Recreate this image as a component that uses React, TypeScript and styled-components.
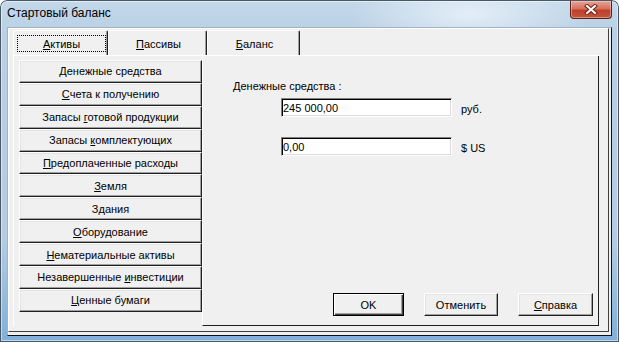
import * as React from 'react'
import styled, { createGlobalStyle } from 'styled-components'

const GlobalStyle = createGlobalStyle`
  html, body {
    margin: 0;
    padding: 0;
  }

  body {
    font-family: "Liberation Sans", Arial, sans-serif;
    background: #ffffff;
  }
`

const Window = styled.div`
  width: 619px;
  height: 342px;
  box-sizing: border-box;
  display: flex;
  flex-direction: column;
  padding: 0 7px 6px 7px;
  border-radius: 7px 7px 0 0;
  background:
    radial-gradient(ellipse 120px 40px at 470px 14px, rgba(236, 244, 250, 0.8), rgba(236, 244, 250, 0) 100%),
    linear-gradient(180deg, #c3d8ea 0%, #b9d0e5 10%, #b3cce3 70%, #7fb0da 100%);
  box-shadow: inset 0 0 0 1px #4a5866, inset 0 0 0 2px rgba(255, 255, 255, 0.5);
`

const TitleBar = styled.div`
  height: 27px;
  display: flex;
  align-items: flex-start;
  flex-shrink: 0;
`

const Title = styled.div`
  padding-top: 6px;
  font-size: 12px;
  line-height: 15px;
  color: #000;
`

const CloseButton = styled.div`
  margin-left: auto;
  margin-top: 1px;
  width: 42px;
  height: 18px;
  box-sizing: border-box;
  display: flex;
  align-items: center;
  justify-content: center;
  border: 1px solid #5b2218;
  border-top: 0;
  border-radius: 0 0 4px 4px;
  background: linear-gradient(180deg, #e6a596 0%, #d6705c 45%, #c0412a 55%, #c4553c 100%);
  box-shadow: inset 0 0 0 1px rgba(255, 220, 210, 0.45);
`

const Client = styled.div`
  flex: 1;
  display: flex;
  box-sizing: border-box;
  background: #f0f0f0;
  border: 1px solid;
  border-color: #a3b2c0 #101010 #101010 #a3b2c0;
  padding: 0 2px 3px 0;
`

const InnerFrame = styled.div`
  flex: 1;
  display: flex;
  box-sizing: border-box;
  border: 1px solid;
  border-color: #ffffff #404040 #404040 #ffffff;
  padding: 1px 9px 5px 4px;
`

const TabControl = styled.div`
  flex: 1;
  display: flex;
  flex-direction: column;
`

const TabStrip = styled.div`
  height: 25px;
  display: flex;
  flex-shrink: 0;
`

const Tab = styled.div<{ $width: number }>`
  width: ${p => p.$width}px;
  box-sizing: border-box;
  display: flex;
  padding: 4px 1px 3px 3px;
  border-top: 1px solid #ffffff;
  border-left: 1px solid #ffffff;
  border-right: 1px solid #202020;
  border-radius: 2px 2px 0 0;
  box-shadow: inset -1px 0 #a0a0a0;
`

const TabLabel = styled.div<{ $focused?: boolean }>`
  flex: 1;
  display: flex;
  align-items: center;
  justify-content: center;
  border: 1px dotted ${p => (p.$focused ? '#000' : 'transparent')};
  font-size: 11px;
  color: #000;
`

const TabPage = styled.div`
  flex: 1;
  display: flex;
  border-top: 1px solid #ffffff;
  border-left: 1px solid #ffffff;
`

const List = styled.div`
  width: 188px;
  box-sizing: border-box;
  padding: 4px 0 0 5px;
  display: flex;
  flex-direction: column;
`

const ListButton = styled.div`
  height: 22.9px;
  box-sizing: border-box;
  display: flex;
  align-items: center;
  justify-content: center;
  background: #f0f0f0;
  border: 1px solid;
  border-color: #ffffff #202020 #202020 #ffffff;
  box-shadow: inset -1px -1px #a0a0a0, inset 1px 1px #e4e4e4;
  font-size: 11px;
  color: #000;
  white-space: nowrap;
`

const RightPanel = styled.div`
  flex: 1;
  display: flex;
  flex-direction: column;
  box-sizing: border-box;
  border-left: 1px solid #ffffff;
  border-right: 1px solid #202020;
  border-bottom: 1px solid #202020;
  padding: 24px 5px 9px 30px;
`

const FieldLabel = styled.div`
  font-size: 11px;
  line-height: 13px;
  color: #000;
`

const FieldRow = styled.div<{ $gap: number }>`
  display: flex;
  align-items: flex-start;
  margin-top: ${p => p.$gap}px;
  padding-left: 48px;
`

const Input = styled.input`
  width: 171px;
  height: 19px;
  box-sizing: border-box;
  margin: 0;
  padding: 0 1px;
  border: 1px solid;
  border-color: #808080 #ffffff #ffffff #808080;
  box-shadow: inset 1px 1px #000, inset -1px -1px #dcdcdc;
  background: #ffffff;
  font-family: "Liberation Sans", Arial, sans-serif;
  font-size: 11px;
  color: #000;
  outline: none;
`

const Unit = styled.div`
  margin-left: 9px;
  padding-top: 5px;
  font-size: 11px;
  line-height: 13px;
  color: #000;
`

const ButtonRow = styled.div`
  margin-top: auto;
  display: flex;
  justify-content: flex-end;
  gap: 20px;
`

const Button = styled.div<{ $width: number; $default?: boolean }>`
  width: ${p => p.$width}px;
  height: 23px;
  box-sizing: border-box;
  display: flex;
  align-items: center;
  justify-content: center;
  background: #f0f0f0;
  border: 1px solid;
  border-color: ${p => (p.$default ? '#000' : '#ffffff #202020 #202020 #ffffff')};
  box-shadow: ${p =>
    p.$default
      ? 'inset 1px 1px #ffffff, inset -1px -1px #404040, inset -2px -2px #a0a0a0'
      : 'inset -1px -1px #a0a0a0, inset 1px 1px #e4e4e4'};
  font-size: 11px;
  color: #000;
`

const accounts: [string, string, string][] = [
  ['', 'Д', 'енежные средства'],
  ['', 'С', 'чета к получению'],
  ['Запасы ', 'г', 'отовой продукции'],
  ['Запасы ', 'к', 'омплектующих'],
  ['', 'П', 'редоплаченные расходы'],
  ['', 'З', 'емля'],
  ['З', 'д', 'ания'],
  ['', 'О', 'борудование'],
  ['', 'Н', 'ематериальные активы'],
  ['Незавершенные ', 'и', 'нвестиции'],
  ['', 'Ц', 'енные бумаги']
]

const App = () => {
  return (
    <>
      <GlobalStyle />
      <Window>
        <TitleBar>
          <Title>Стартовый баланс</Title>
          <CloseButton>
            <svg width="14" height="11" viewBox="0 0 14 11">
              <path d="M3 2 L11 9 M11 2 L3 9" stroke="#6b2418" strokeWidth="4" strokeLinecap="square" />
              <path d="M3 2 L11 9 M11 2 L3 9" stroke="#ffffff" strokeWidth="2" strokeLinecap="square" />
            </svg>
          </CloseButton>
        </TitleBar>
        <Client>
          <InnerFrame>
            <TabControl>
              <TabStrip>
                <Tab $width={95}>
                  <TabLabel $focused><span><u>А</u>ктивы</span></TabLabel>
                </Tab>
                <Tab $width={99}>
                  <TabLabel><span><u>П</u>ассивы</span></TabLabel>
                </Tab>
                <Tab $width={93}>
                  <TabLabel><span><u>Б</u>аланс</span></TabLabel>
                </Tab>
              </TabStrip>
              <TabPage>
                <List>
                  {accounts.map(([before, key, after]) => (
                    <ListButton key={before + key + after}>
                      <span>{before}<u>{key}</u>{after}</span>
                    </ListButton>
                  ))}
                </List>
                <RightPanel>
                  <FieldLabel>Денежные средства :</FieldLabel>
                  <FieldRow $gap={5}>
                    <Input defaultValue="245 000,00" readOnly />
                    <Unit>руб.</Unit>
                  </FieldRow>
                  <FieldRow $gap={20}>
                    <Input defaultValue="0,00" readOnly />
                    <Unit>$ US</Unit>
                  </FieldRow>
                  <ButtonRow>
                    <Button $width={71} $default>OK</Button>
                    <Button $width={74}>Отменить</Button>
                    <Button $width={75}><span><u>С</u>правка</span></Button>
                  </ButtonRow>
                </RightPanel>
              </TabPage>
            </TabControl>
          </InnerFrame>
        </Client>
      </Window>
    </>
  )
}

export default App
